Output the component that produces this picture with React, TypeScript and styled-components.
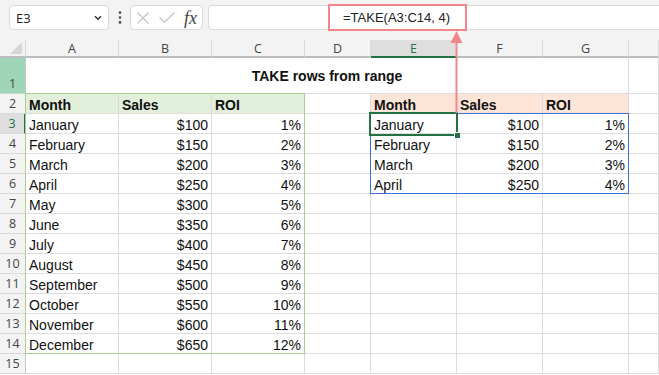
import React from 'react';
import styled, { createGlobalStyle } from 'styled-components';

const GlobalStyle = createGlobalStyle`
  html, body { margin: 0; padding: 0; background: #fff; }
  body { font-family: "Liberation Sans", Arial, sans-serif; overflow: hidden; }
  * { box-sizing: border-box; }
`;

const COLS = '26px 93px 93px 93px 66px 86px 86px 86px 1fr';
const ROWS = '18px 36px repeat(14, 20px)';
const LETTERS = ['A', 'B', 'C', 'D', 'E', 'F', 'G', ''];
const MONTHS = ['January', 'February', 'March', 'April', 'May', 'June', 'July', 'August', 'September', 'October', 'November', 'December'];

const Window = styled.div`
  position: relative;
  width: 659px;
  height: 375px;
  overflow: hidden;
  background: #fff;
`;

const Toolbar = styled.div`
  height: 40px;
  background: #f3f3f3;
  display: flex;
  align-items: flex-start;
  padding: 5px 0 0 9px;
`;

const Field = styled.div`
  height: 25px;
  background: #fff;
  border: 1px solid #dadada;
  border-radius: 4px;
  display: flex;
  align-items: center;
`;

const NameBox = styled(Field)`
  width: 100px;
  padding: 0 6px 0 6px;
  justify-content: space-between;
  font-family: "Open Sans", sans-serif;
  font-size: 13px;
  color: #222;
`;

const Kebab = styled.div`
  width: 21px;
  height: 25px;
  display: flex;
  align-items: center;
  justify-content: center;
`;

const FxGroup = styled(Field)`
  width: 73px;
  padding-left: 6px;
  gap: 10px;
`;

const FxLabel = styled.span`
  font-family: "Liberation Serif", serif;
  font-style: italic;
  font-size: 18px;
  color: #444;
  margin-left: -1px;
  line-height: 1;
`;

const FormulaInput = styled(Field)`
  flex: 1;
  margin: 0 -10px 0 5px;
  padding-left: 119px;
`;

const Callout = styled.div`
  width: 139px;
  height: 27px;
  border: 2px solid #f3868a;
  padding-left: 13px;
  display: flex;
  align-items: center;
  font-family: "Liberation Sans", Arial, sans-serif;
  font-size: 13px;
  color: #222;
`;

const Sheet = styled.div`
  position: relative;
`;

const Grid = styled.div`
  display: grid;
  grid-template-columns: ${COLS};
  grid-template-rows: ${ROWS};
`;

const Overlay = styled(Grid)`
  position: absolute;
  inset: 0;
  pointer-events: none;
`;

const Corner = styled.div`
  background: #f3f3f3;
  border-right: 1px solid #d4d4d4;
  border-bottom: 2px solid #bdbdbd;
  display: flex;
  align-items: flex-end;
  justify-content: flex-end;
  padding: 0 3px 2px 0;
`;

const ColHead = styled.div<{ $active?: boolean }>`
  background: ${p => (p.$active ? '#dedede' : '#f3f3f3')};
  border-right: 1px solid #dadada;
  border-bottom: 2px solid ${p => (p.$active ? '#217346' : '#bdbdbd')};
  color: ${p => (p.$active ? '#217346' : '#444')};
  font-family: "Open Sans", sans-serif;
  font-size: 12.5px;
  display: flex;
  align-items: center;
  justify-content: center;
`;

const RowHead = styled.div<{ $state?: 'active' | 'marked' }>`
  background: ${p => (p.$state === 'marked' ? '#9fd5b7' : p.$state === 'active' ? '#dedede' : '#f3f3f3')};
  border-right: ${p => (p.$state === 'active' ? '2px solid #217346' : '1px solid #c8c8c8')};
  border-bottom: 1px solid ${p => (p.$state === 'marked' ? '#c8d9cf' : '#dadada')};
  color: ${p => (p.$state === 'active' ? '#217346' : '#444')};
  font-family: "Open Sans", sans-serif;
  font-size: 12.5px;
  line-height: 16px;
  padding-bottom: 1px;
  display: flex;
  align-items: flex-end;
  justify-content: center;
`;

const Cell = styled.div<{ $right?: boolean; $fill?: string; $bold?: boolean }>`
  border-right: 1px solid #dcdcdc;
  border-bottom: 1px solid #dcdcdc;
  background: ${p => p.$fill || '#fff'};
  font-weight: ${p => (p.$bold ? 700 : 400)};
  font-size: 14px;
  line-height: 16px;
  color: #111;
  padding: 0 3px;
  white-space: nowrap;
  overflow: hidden;
  display: flex;
  align-items: flex-end;
  justify-content: ${p => (p.$right ? 'flex-end' : 'flex-start')};
`;

const TitleCell = styled(Cell)`
  grid-column: span 7;
  align-items: center;
  justify-content: center;
  padding-top: 1px;
`;

const RangeBox = styled.div<{ $cols: string; $rows: string; $color: string }>`
  grid-column: ${p => p.$cols};
  grid-row: ${p => p.$rows};
  border: 1px solid ${p => p.$color};
  margin: -1px 0 0 -1px;
`;

const Selection = styled.div`
  grid-column: 6 / 7;
  grid-row: 4 / 5;
  position: relative;
  border: 2px solid #217346;
  margin: -2px -1px -2px -2px;
`;

const FillHandle = styled.div`
  position: absolute;
  right: -5px;
  bottom: -5px;
  width: 7px;
  height: 7px;
  background: #217346;
  border: 1px solid #fff;
`;

const Arrow = styled.svg`
  position: absolute;
  left: 448px;
  top: 30px;
  z-index: 3;
`;

const greenFill = '#e2efda';
const peachFill = '#fce4d6';

export default function App() {
  const rows: React.ReactNode[] = [];

  // header row
  rows.push(
    <Corner key="corner">
      <svg width="13" height="12" viewBox="0 0 13 12">
        <polygon points="13,0 13,12 1,12" fill="#d6d6d6" />
      </svg>
    </Corner>
  );
  LETTERS.forEach((l, i) => rows.push(<ColHead key={`h${i}`} $active={l === 'E'}>{l}</ColHead>));

  // row 1
  rows.push(<RowHead key="r1" $state="marked">1</RowHead>);
  rows.push(<TitleCell key="title" $bold>TAKE rows from range</TitleCell>);
  rows.push(<Cell key="h1" />);

  // row 2
  rows.push(<RowHead key="r2">2</RowHead>);
  ['Month', 'Sales', 'ROI'].forEach(t => rows.push(<Cell key={`a2${t}`} $bold $fill={greenFill}>{t}</Cell>));
  rows.push(<Cell key="d2" />);
  ['Month', 'Sales', 'ROI'].forEach(t => rows.push(<Cell key={`e2${t}`} $bold $fill={peachFill}>{t}</Cell>));
  rows.push(<Cell key="h2" />);

  // rows 3-14
  MONTHS.forEach((m, i) => {
    const r = i + 3;
    const sales = `$${100 + i * 50}`;
    const roi = `${i + 1}%`;
    const taken = i < 4;
    rows.push(<RowHead key={`r${r}`} $state={r === 3 ? 'active' : undefined}>{r}</RowHead>);
    rows.push(<Cell key={`a${r}`}>{m}</Cell>);
    rows.push(<Cell key={`b${r}`} $right>{sales}</Cell>);
    rows.push(<Cell key={`c${r}`} $right>{roi}</Cell>);
    rows.push(<Cell key={`d${r}`} />);
    rows.push(<Cell key={`e${r}`}>{taken ? m : ''}</Cell>);
    rows.push(<Cell key={`f${r}`} $right>{taken ? sales : ''}</Cell>);
    rows.push(<Cell key={`g${r}`} $right>{taken ? roi : ''}</Cell>);
    rows.push(<Cell key={`h${r}`} />);
  });

  // row 15
  rows.push(<RowHead key="r15">15</RowHead>);
  for (let c = 0; c < 8; c++) rows.push(<Cell key={`x15${c}`} />);

  return (
    <Window>
      <GlobalStyle />
      <Toolbar>
        <NameBox>
          <span>E3</span>
          <svg width="8" height="6" viewBox="0 0 8 6">
            <path d="M1 1.3 L4 4.3 L7 1.3" fill="none" stroke="#333" strokeWidth="1.5" />
          </svg>
        </NameBox>
        <Kebab>
          <svg width="4" height="13" viewBox="0 0 4 13">
            <circle cx="2" cy="1.6" r="1.3" fill="#444" />
            <circle cx="2" cy="6.5" r="1.3" fill="#444" />
            <circle cx="2" cy="11.4" r="1.3" fill="#444" />
          </svg>
        </Kebab>
        <FxGroup>
          <svg width="12" height="12" viewBox="0 0 12 12">
            <path d="M0.5 0.5 L11.5 11.5 M11.5 0.5 L0.5 11.5" stroke="#c4c4c4" strokeWidth="1.2" />
          </svg>
          <svg width="16" height="11" viewBox="0 0 16 11">
            <path d="M0.5 5.5 L5.5 10.2 L15.5 0.5" fill="none" stroke="#c4c4c4" strokeWidth="1.2" />
          </svg>
          <FxLabel>fx</FxLabel>
        </FxGroup>
        <FormulaInput>
          <Callout>=TAKE(A3:C14, 4)</Callout>
        </FormulaInput>
      </Toolbar>
      <Sheet>
        <Grid>{rows}</Grid>
        <Overlay>
          <RangeBox $cols="2 / 5" $rows="3 / 16" $color="#a9d08e" />
          <RangeBox $cols="6 / 9" $rows="4 / 8" $color="#3b6fd4" />
          <Selection>
            <FillHandle />
          </Selection>
        </Overlay>
      </Sheet>
      <Arrow width="17" height="84" viewBox="0 0 17 84">
        <polygon points="8.5,1 2.5,13 14.5,13" fill="#f3868a" />
        <rect x="7.5" y="12" width="2" height="71" fill="#f3868a" />
      </Arrow>
    </Window>
  );
}
